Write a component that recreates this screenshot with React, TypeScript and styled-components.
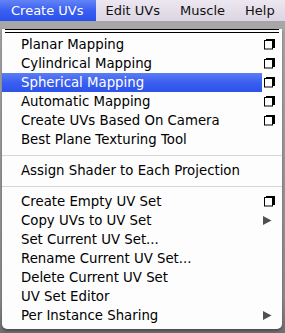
import React from "react";
import styled, { createGlobalStyle } from "styled-components";

const Global = createGlobalStyle`
  html, body { margin: 0; padding: 0; background: #8f8f8f; }
  * { box-sizing: border-box; }
`;

const Screen = styled.div`
  width: 285px;
  height: 333px;
  overflow: hidden;
  background: linear-gradient(#a9a9a9, #8a8a8a 90%, #6f6f6f);
  font-family: "DejaVu Sans", "Noto Sans", sans-serif;
  color: #000;
`;

const MenuBar = styled.div`
  display: flex;
  height: 22px;
  background: linear-gradient(#ece7f0, #dcd5e2);
  border-bottom: 1px solid #a7a3ab;
`;

const MenuTitle = styled.div<{ $active?: boolean }>`
  height: 21px;
  line-height: 21px;
  font-size: 13px;
  padding: ${(p) => (p.$active ? "0 12px 0 11px" : "0 10px")};
  color: ${(p) => (p.$active ? "#fff" : "#111")};
  background: ${(p) =>
    p.$active ? "linear-gradient(#6384f7, #3a5ff0 50%, #2a50ec)" : "transparent"};
  white-space: nowrap;
`;

const Panel = styled.div`
  margin: 0 3px 0 2px;
  background: #fdfdfd;
  border-radius: 0 0 5px 5px;
  padding-bottom: 4px;
  box-shadow: 0 2px 3px rgba(0, 0, 0, 0.35);
`;

const TearOff = styled.div`
  margin: 7px 3px 2px 3px;
  height: 4px;
  border-top: 1px solid #000;
  border-bottom: 1px solid #000;
`;

const Row = styled.div`
  display: flex;
  height: 19px;
`;

const Label = styled.div<{ $active?: boolean }>`
  flex: 1;
  padding-left: 19px;
  line-height: 19px;
  font-size: 13.3px;
  white-space: nowrap;
  color: ${(p) => (p.$active ? "#fff" : "#000")};
  background: ${(p) =>
    p.$active ? "linear-gradient(#5b7df5, #3b5ff0 50%, #2c52ea)" : "transparent"};
`;

const Trail = styled.div`
  width: 20px;
  display: flex;
  align-items: center;
  padding-left: 2px;
`;

const Separator = styled.div`
  margin: 6px 0 5px 0;
  border-top: 1px solid #d6d6d6;
`;

const OptionBox = () => (
  <svg width="11" height="11" viewBox="0 0 11 11">
    <rect x="2" y="0" width="9" height="9" fill="#000" />
    <rect x="0.5" y="1.5" width="8" height="8.5" fill="#fff" stroke="#000" />
  </svg>
);

const Arrow = () => (
  <svg width="9" height="9" viewBox="0 0 9 9" style={{ marginLeft: -1 }}>
    <polygon points="0,0 8.5,4.5 0,9" fill="#505050" />
  </svg>
);

type Item = { label: string; trail?: "box" | "arrow"; active?: boolean } | "sep";

const items: Item[] = [
  { label: "Planar Mapping", trail: "box" },
  { label: "Cylindrical Mapping", trail: "box" },
  { label: "Spherical Mapping", trail: "box", active: true },
  { label: "Automatic Mapping", trail: "box" },
  { label: "Create UVs Based On Camera", trail: "box" },
  { label: "Best Plane Texturing Tool" },
  "sep",
  { label: "Assign Shader to Each Projection" },
  "sep",
  { label: "Create Empty UV Set", trail: "box" },
  { label: "Copy UVs to UV Set", trail: "arrow" },
  { label: "Set Current UV Set..." },
  { label: "Rename Current UV Set..." },
  { label: "Delete Current UV Set" },
  { label: "UV Set Editor" },
  { label: "Per Instance Sharing", trail: "arrow" },
];

export default function App() {
  return (
    <Screen>
      <Global />
      <MenuBar>
        <MenuTitle $active>Create UVs</MenuTitle>
        <MenuTitle>Edit UVs</MenuTitle>
        <MenuTitle>Muscle</MenuTitle>
        <MenuTitle>Help</MenuTitle>
      </MenuBar>
      <Panel>
        <TearOff />
        {items.map((it, i) =>
          it === "sep" ? (
            <Separator key={i} />
          ) : (
            <Row key={i}>
              <Label $active={it.active}>{it.label}</Label>
              <Trail>
                {it.trail === "box" && <OptionBox />}
                {it.trail === "arrow" && <Arrow />}
              </Trail>
            </Row>
          )
        )}
      </Panel>
    </Screen>
  );
}
